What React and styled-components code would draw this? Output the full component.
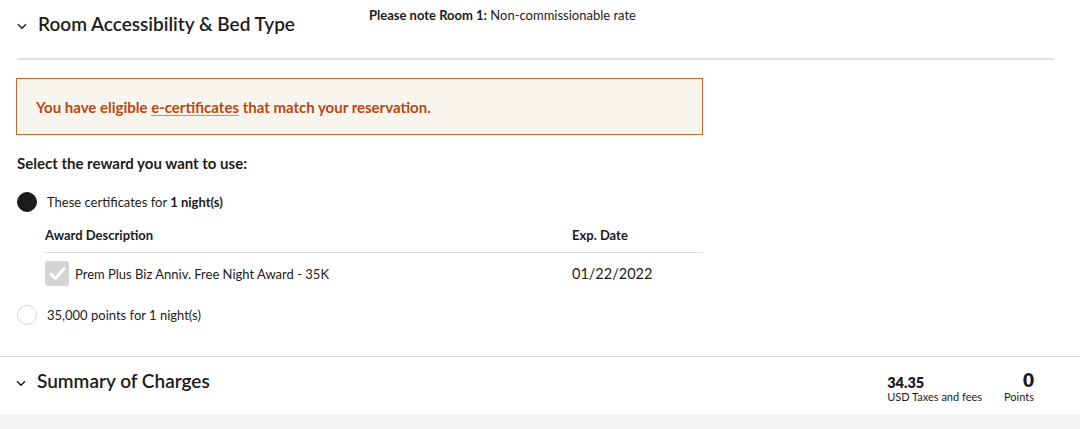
import React from 'react';
import styled, { createGlobalStyle } from 'styled-components';

const GlobalStyle = createGlobalStyle`
  body {
    margin: 0;
    background: #fff;
    font-family: Lato, "Liberation Sans", sans-serif;
    color: #1c1c1c;
  }
`;

const Page = styled.div`
  width: 1080px;
  height: 429px;
  overflow: hidden;
  display: flex;
  flex-direction: column;
`;

const TopSection = styled.section`
  padding: 0 26px 0 16px;
`;

const HeaderRow = styled.div`
  display: flex;
  align-items: flex-start;
  height: 58px;
  border-bottom: 2px solid #e3e3e3;
  margin-left: 1px;
`;

const TitleWrap = styled.div`
  display: flex;
  align-items: center;
  width: 352px;
  padding-top: 12px;
`;

const Chevron = styled.svg`
  width: 10px;
  height: 7px;
  margin: 5px 11px 0 0;
  flex: none;
`;

const Title = styled.h2`
  margin: 0;
  font-size: 19px;
  font-weight: 600;
  color: #1c1c1c;
`;

const Note = styled.div`
  font-size: 13px;
  padding-top: 7px;

  strong {
    font-weight: 700;
  }
`;

const Alert = styled.div`
  margin-top: 18px;
  width: 687px;
  height: 57px;
  box-sizing: border-box;
  border: 1px solid #d0652e;
  background: #f8f5ef;
  display: flex;
  align-items: center;
  padding-left: 19px;
  font-size: 15px;
  font-weight: 700;
  color: #b8480f;

  a {
    color: inherit;
    text-decoration: underline;
    text-underline-offset: 2px;
    text-decoration-color: #d28a63;
  }
`;

const Prompt = styled.div`
  margin: 19px 0 0 1px;
  font-size: 15px;
  font-weight: 700;
`;

const OptionRow = styled.label`
  display: flex;
  align-items: center;
  gap: 10px;
  margin-top: ${p => p.$top}px;
  margin-left: 1px;
  font-size: 13px;

  strong {
    font-weight: 700;
  }
`;

const Radio = styled.span`
  width: 20px;
  height: 20px;
  border-radius: 50%;
  box-sizing: border-box;
  flex: none;
  background: ${p => (p.$checked ? '#1c1c1c' : '#fff')};
  border: 1px solid ${p => (p.$checked ? '#1c1c1c' : '#d6d6d6')};
`;

const AwardTable = styled.div`
  margin: 15px 0 0 29px;
  width: 658px;
`;

const TableRow = styled.div`
  display: grid;
  grid-template-columns: 527px 1fr;
  align-items: center;
`;

const HeadRow = styled(TableRow)`
  height: 25px;
  border-bottom: 1px solid #dcdcdc;
  font-size: 13px;
  font-weight: 700;
  align-items: start;
`;

const BodyRow = styled(TableRow)`
  height: 41px;
`;

const AwardCell = styled.div`
  display: flex;
  align-items: center;
  gap: 6px;
  font-size: 13px;
`;

const CheckBox = styled.span`
  width: 24px;
  height: 25px;
  border-radius: 3px;
  background: #d4d4d4;
  display: flex;
  align-items: center;
  justify-content: center;
  flex: none;
`;

const DateCell = styled.div`
  font-size: 14.5px;
`;

const Summary = styled.section`
  margin-top: 31px;
  border-top: 1px solid #dcdcdc;
  height: 57px;
  display: flex;
  align-items: flex-start;
  padding: 0 46px 0 16px;
`;

const SummaryTitle = styled.div`
  display: flex;
  align-items: center;
  flex: 1;
  padding-top: 12px;
`;

const Totals = styled.div`
  display: flex;
  gap: 22px;
  align-items: flex-end;
  padding-top: 13px;
`;

const Total = styled.div`
  display: flex;
  flex-direction: column;
  align-items: ${p => (p.$right ? 'flex-end' : 'flex-start')};
`;

const Amount = styled.div`
  font-weight: 800;
  font-size: ${p => (p.$big ? 19 : 14.5)}px;
  line-height: ${p => (p.$big ? 20 : 15)}px;
`;

const Caption = styled.div`
  font-size: 11px;
  line-height: 13px;
`;

const Footer = styled.div`
  flex: 1;
  background: #f3f3f3;
`;

const DownChevron = () => (
  <Chevron viewBox="0 0 10 7">
    <path d="M1 1.2 L5 5.2 L9 1.2" fill="none" stroke="#1c1c1c" strokeWidth="1.4" />
  </Chevron>
);

export default function App() {
  return (
    <Page>
      <GlobalStyle />
      <TopSection>
        <HeaderRow>
          <TitleWrap>
            <DownChevron />
            <Title>Room Accessibility &amp; Bed Type</Title>
          </TitleWrap>
          <Note>
            <strong>Please note Room 1:</strong> Non-commissionable rate
          </Note>
        </HeaderRow>

        <Alert>
          <span>
            You have eligible <a href="#">e-certificates</a> that match your reservation.
          </span>
        </Alert>

        <Prompt>Select the reward you want to use:</Prompt>

        <OptionRow $top={20}>
          <Radio $checked />
          <span>
            These certificates for <strong>1 night(s)</strong>
          </span>
        </OptionRow>

        <AwardTable>
          <HeadRow>
            <div>Award Description</div>
            <div>Exp. Date</div>
          </HeadRow>
          <BodyRow>
            <AwardCell>
              <CheckBox>
                <svg width="17" height="15" viewBox="0 0 17 15">
                  <path d="M2 8 L6.5 12.5 L15 2.5" fill="none" stroke="#ffffff" strokeWidth="3" strokeLinecap="round" strokeLinejoin="round" />
                </svg>
              </CheckBox>
              Prem Plus Biz Anniv. Free Night Award - 35K
            </AwardCell>
            <DateCell>01/22/2022</DateCell>
          </BodyRow>
        </AwardTable>

        <OptionRow $top={11}>
          <Radio />
          <span>35,000 points for 1 night(s)</span>
        </OptionRow>
      </TopSection>

      <Summary>
        <SummaryTitle>
          <DownChevron />
          <Title>Summary of Charges</Title>
        </SummaryTitle>
        <Totals>
          <Total>
            <Amount>34.35</Amount>
            <Caption>USD Taxes and fees</Caption>
          </Total>
          <Total $right>
            <Amount $big>0</Amount>
            <Caption>Points</Caption>
          </Total>
        </Totals>
      </Summary>
      <Footer />
    </Page>
  );
}
